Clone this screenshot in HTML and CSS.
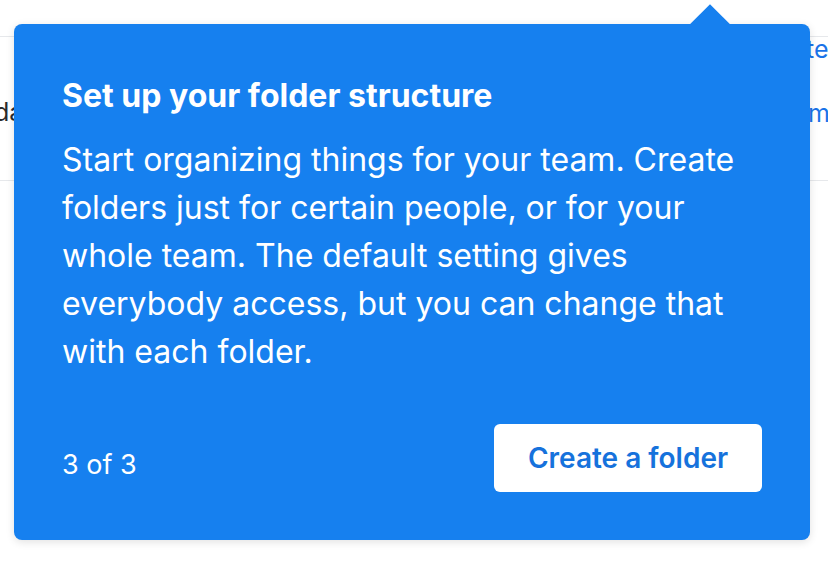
FILE: index.html
```html
<!DOCTYPE html>
<html>
<head>
    <meta charset="utf-8">
    <title>Team folders</title>
    <link rel="stylesheet" href="styles.css">
</head>
<body>
    <div class="page">
        <div class="row">
            <span class="cell-left">da</span>
            <span class="cell-right">
                <span class="link">te</span>
                <span class="link">m</span>
            </span>
        </div>
    </div>

    <div class="tour">
        <div class="tour-arrow"></div>
        <h2 class="tour-title">Set up your folder structure</h2>
        <p class="tour-body">Start organizing things for your team. Create folders just for certain people, or for your whole team. The default setting gives everybody access, but you can change that with each folder.</p>
        <div class="tour-footer">
            <span class="tour-step">3 of 3</span>
            <button class="tour-button">Create a folder</button>
        </div>
    </div>
</body>
</html>
```

FILE: styles.css
```css
body {
    margin: 0;
    padding: 0;
    background: #ffffff;
    overflow: hidden;
    font-family: Inter, "Liberation Sans", sans-serif;
}

.page {
    padding-top: 36px;
}

.row {
    display: flex;
    justify-content: space-between;
    height: 143px;
    border-top: 1px solid #e6e8eb;
    border-bottom: 1px solid #e6e8eb;
}

.cell-left {
    margin-left: -6px;
    padding-top: 60px;
    font-size: 25px;
    line-height: 30px;
    color: #2b2b2b;
    white-space: nowrap;
}

.cell-right {
    display: flex;
    flex-direction: column;
    width: 20px;
    font-size: 25px;
    white-space: nowrap;
}

.link {
    color: #1a73e8;
    line-height: 24px;
}

.link:first-child {
    margin-top: 0;
    margin-left: -2px;
}

.link + .link {
    margin-top: 40px;
}

.tour {
    position: absolute;
    left: 14px;
    top: 24px;
    width: 796px;
    height: 516px;
    box-sizing: border-box;
    padding: 48px;
    background: #1680ef;
    border-radius: 8px;
    box-shadow: 0 2px 8px rgba(0, 0, 0, 0.12);
    color: #ffffff;
    display: flex;
    flex-direction: column;
}

.tour-arrow {
    position: absolute;
    top: -14px;
    left: 682px;
    width: 28px;
    height: 28px;
    background: #1680ef;
    transform: rotate(45deg);
}

.tour-title {
    margin: 4px 0 0 0;
    font-size: 32px;
    font-weight: 700;
    line-height: 40px;
}

.tour-body {
    margin: 20px 0 0 0;
    font-size: 32px;
    line-height: 48px;
}

.tour-footer {
    margin-top: auto;
    display: flex;
    align-items: center;
    justify-content: space-between;
}

.tour-step {
    font-size: 27px;
    margin-top: 12px;
}

.tour-button {
    width: 268px;
    height: 68px;
    border: none;
    border-radius: 6px;
    background: #ffffff;
    color: #1672dc;
    font-family: Inter, "Liberation Sans", sans-serif;
    font-size: 28px;
    font-weight: 600;
}
```
